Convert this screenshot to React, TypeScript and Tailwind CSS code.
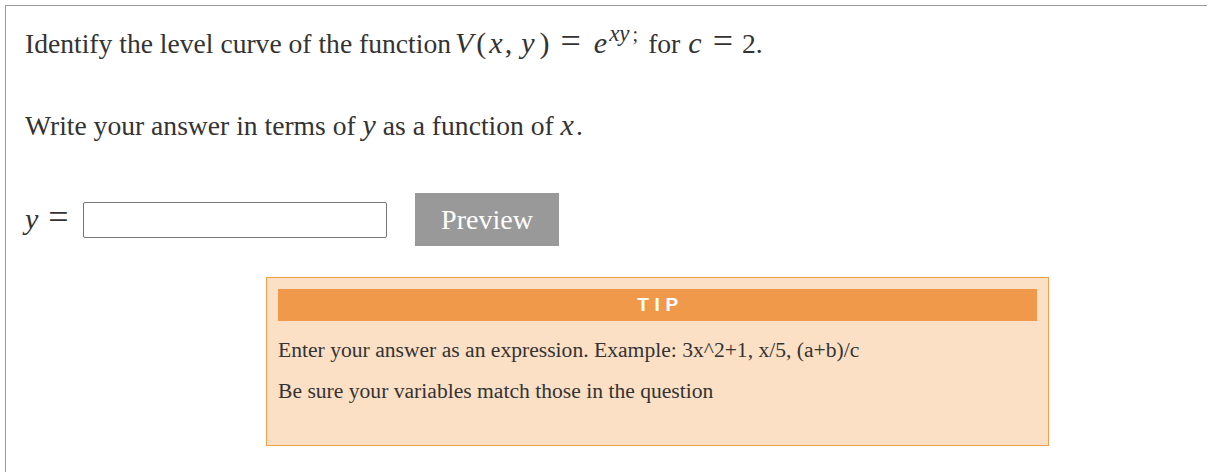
import React from 'react';

const serif = { fontFamily: '"Liberation Serif", "Times New Roman", serif' };

function V({ children, className = '' }: { children: React.ReactNode; className?: string }) {
    return <i className={`text-[30px] italic leading-[20px] ${className}`}>{children}</i>;
}

function Eq({ className = '' }: { className?: string }) {
    return <span className={`text-[36px] leading-[20px] ${className}`}>=</span>;
}

export default function App() {
    return (
        <div className="h-[472px] w-[1209px] overflow-hidden bg-white">
            <div
                className="ml-[5px] mt-[5px] h-[467px] w-[1202px] border-l border-t border-[#999] pl-[19px] pt-[20px] text-[#333]"
                style={serif}
            >
                {/* question */}
                <p className="h-[36px] whitespace-nowrap text-[27.6px] leading-[36px]">
                    Identify the level curve of the function
                    <V className="ml-[4px]">V</V>
                    <span className="ml-[3px] text-[30px] leading-[20px]">(</span>
                    <V className="ml-[3px]">x</V>
                    <span className="ml-[2px] text-[30px] leading-[20px]">,</span>
                    <V className="ml-[9px]">y</V>
                    <span className="ml-[5px] text-[30px] leading-[20px]">)</span>
                    <Eq className="ml-[11px]" />
                    <V className="ml-[13px]">e</V>
                    <sup className="relative -top-[12px] ml-[2px] text-[23px] leading-none">
                        <i className="italic">xy</i>
                        <span className="ml-[3px] text-[20px]">;</span>
                    </sup>
                    <span className="ml-[10px]">for</span>
                    <V className="ml-[8px]">c</V>
                    <Eq className="ml-[11px]" />
                    <span className="ml-[9px]">2.</span>
                </p>

                <p className="mt-[46px] h-[36px] whitespace-nowrap text-[27.6px] leading-[36px]">
                    Write your answer in terms of <V>y</V> as a function of <V className="mr-[2px]">x</V>.
                </p>

                {/* answer row */}
                <div className="mt-[49px] flex items-center">
                    <span className="w-[58px] whitespace-nowrap text-[28px] leading-[36px]">
                        <V>y</V>
                        <Eq className="ml-[10px]" />
                    </span>
                    <input
                        type="text"
                        className="h-[36px] w-[304px] rounded-[2px] border border-[#767676] bg-white"
                    />
                    <button
                        className="ml-[28px] h-[53px] w-[144px] bg-[#999] text-[28px] text-white"
                        style={serif}
                    >
                        Preview
                    </button>
                </div>

                {/* tip box */}
                <div className="ml-[241px] mt-[31px] h-[169px] w-[783px] border border-[#f0a04b] bg-[#fce0c5] p-[11px]">
                    <div className="flex h-[32px] items-center justify-center bg-[#f0994a] pl-[6px] font-[Liberation_Sans,Arial,sans-serif] text-[19px] font-bold tracking-[0.3em] text-white">
                        TIP
                    </div>
                    <p className="mt-[14px] text-[21.6px] leading-[30px]">
                        Enter your answer as an expression. Example: 3x^2+1, x/5, (a+b)/c
                    </p>
                    <p className="mt-[11px] text-[21.6px] leading-[30px]">
                        Be sure your variables match those in the question
                    </p>
                </div>
            </div>
        </div>
    );
}
